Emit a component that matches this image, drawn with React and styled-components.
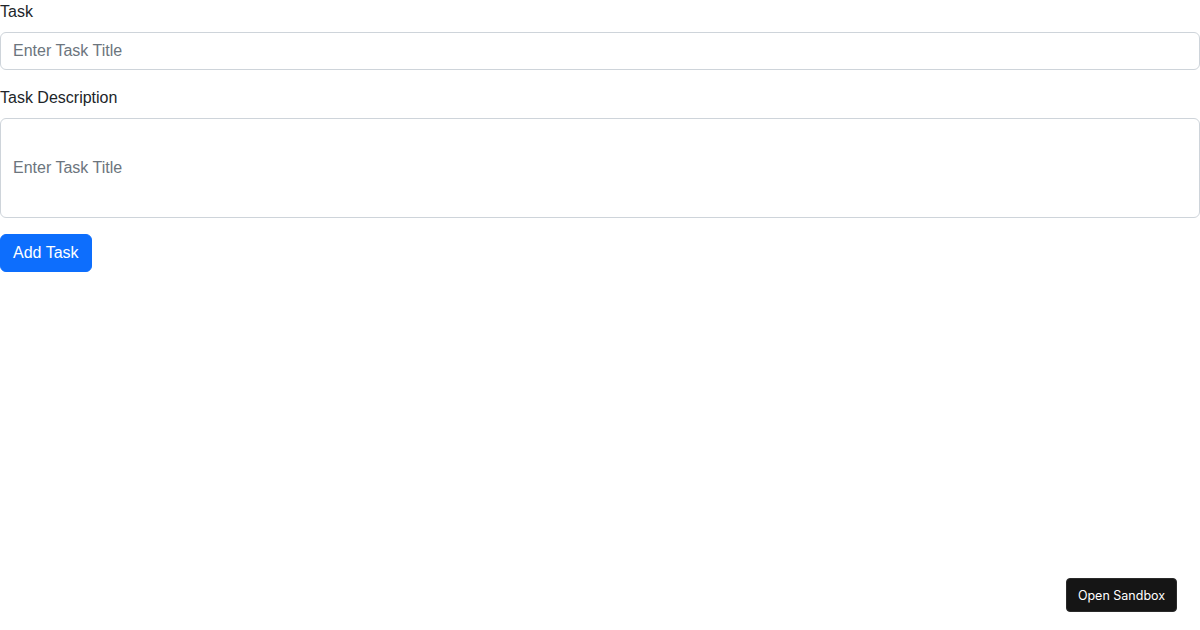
import styled, { createGlobalStyle } from "styled-components";

const GlobalStyle = createGlobalStyle`
  html, body {
    margin: 0;
    padding: 0;
    background: #fff;
  }
  body {
    font-family: "Liberation Sans", Arial, sans-serif;
    font-size: 16px;
    line-height: 1.5;
    color: #212529;
  }
  * {
    box-sizing: border-box;
  }
`;

export default function App() {
  return (
    <>
      <GlobalStyle />
      <Form onSubmit={(e) => e.preventDefault()}>
        <Field>
          <Label htmlFor="task">Task</Label>
          <Input id="task" type="text" placeholder="Enter Task Title" />
        </Field>
        <Field>
          <Label htmlFor="desc">Task Description</Label>
          <Input id="desc" type="text" placeholder="Enter Task Title" tall />
        </Field>
        <PrimaryButton type="submit">Add Task</PrimaryButton>
      </Form>
      <SandboxButton>Open Sandbox</SandboxButton>
    </>
  );
}

const Form = styled.form`
  display: flex;
  flex-direction: column;
  align-items: flex-start;
  width: 100%;
`;

const Field = styled.div`
  width: 100%;
  margin-bottom: 16px;
`;

const Label = styled.label`
  display: inline-block;
  margin-bottom: 8px;
`;

const Input = styled.input`
  display: block;
  width: 100%;
  height: ${(props) => (props.tall ? "100px" : "38px")};
  padding: 6px 12px;
  font-family: inherit;
  font-size: 16px;
  line-height: 1.5;
  color: #212529;
  background: #fff;
  border: 1px solid #ced4da;
  border-radius: 6px;
  outline: none;

  &::placeholder {
    color: #6c757d;
    opacity: 1;
  }
`;

const PrimaryButton = styled.button`
  height: 38px;
  padding: 6px 12px;
  font-family: inherit;
  font-size: 16px;
  line-height: 1.5;
  color: #fff;
  background: #0d6efd;
  border: 1px solid #0d6efd;
  border-radius: 6px;
  cursor: pointer;
`;

const SandboxButton = styled.button`
  position: fixed;
  right: 23px;
  bottom: 18px;
  width: 111px;
  height: 34px;
  padding: 0;
  white-space: nowrap;
  font-family: Inter, "Liberation Sans", sans-serif;
  font-size: 12.5px;
  color: #fff;
  background: #151515;
  border: 1px solid #2a2a2a;
  border-radius: 4px;
  cursor: pointer;
`;
